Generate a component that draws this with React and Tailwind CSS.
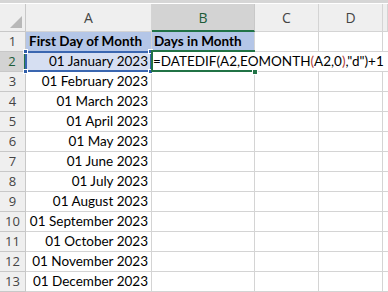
const months = [
  'January', 'February', 'March', 'April', 'May', 'June',
  'July', 'August', 'September', 'October', 'November', 'December',
];

const cols = ['A', 'B', 'C', 'D', ''];

function Handle({ className }) {
  return <div className={`absolute w-[5px] h-[5px] bg-[#2f5da8] border border-white ${className}`} />;
}

export default function App() {
  return (
    <div className="w-[388px] h-[292px] overflow-hidden bg-white relative font-['Lato','Liberation_Sans',sans-serif] text-[13.5px] text-black">
      {/* strip above the headers */}
      <div className="h-[3px] bg-[#d6d6d6] border-b border-white box-content" />

      <div className="grid grid-cols-[26px_126px_103px_64px_64px_1fr]">
        {/* column headers */}
        <div className="h-[28px] bg-[#efefef] border-r border-b border-[#c8c8c8] relative">
          <div className="absolute right-[3px] bottom-[3px] w-0 h-0 border-l-[12px] border-l-transparent border-b-[12px] border-b-[#b8b8b8]" />
        </div>
        {cols.map((c) =>
          c === 'B' ? (
            <div key={c} className="h-[28px] bg-[#d3d3d3] border-r border-[#c8c8c8] border-b-2 border-b-[#217346] flex items-center justify-center font-['Open_Sans',sans-serif] text-[14px] text-[#1d5c38]">
              {c}
            </div>
          ) : (
            <div key={c} className="h-[28px] bg-[#efefef] border-r border-b border-[#d4d4d4] flex items-center justify-center font-['Open_Sans',sans-serif] text-[14px] text-[#444]">
              {c}
            </div>
          )
        )}

        {/* row 1 */}
        <div className="h-[20px] bg-[#efefef] border-r border-b border-[#c8c8c8] flex items-center justify-center font-['Open_Sans',sans-serif] text-[13px] text-[#444]">1</div>
        <div className="h-[20px] bg-[#b4c6e7] border-r border-b border-[#d4d4d4] flex items-center px-[3px] font-bold whitespace-nowrap">First Day of Month</div>
        <div className="h-[20px] bg-[#b4c6e7] border-r border-b border-[#d4d4d4] flex items-center px-[2px] font-bold whitespace-nowrap">Days in Month</div>
        <div className="h-[20px] border-r border-b border-[#d4d4d4]" />
        <div className="h-[20px] border-r border-b border-[#d4d4d4]" />
        <div className="h-[20px] border-b border-[#d4d4d4]" />

        {/* row 2: A2 referenced, B2 being edited */}
        <div className="h-[20px] bg-[#d3d3d3] border-r-2 border-r-[#217346] border-b border-[#c8c8c8] flex items-center justify-center font-['Open_Sans',sans-serif] text-[13px] text-[#1d5c38]">2</div>
        <div className="h-[20px] bg-[#d6dff2] border-r border-b border-[#d4d4d4] flex items-center justify-end px-[3px] whitespace-nowrap">01 January 2023</div>
        <div className="h-[20px] col-span-4 border-b border-[#d4d4d4] flex items-center px-[1px] whitespace-nowrap">
          =DATEDIF(A2,EOMONTH<span className="text-[#b0403a]">(</span>A2,0<span className="text-[#b0403a]">)</span>,"d")+1
        </div>

        {months.slice(1).map((m, i) => (
          <Row key={m} n={i + 3} label={`01 ${m} 2023`} />
        ))}
      </div>

      {/* reference border round A2 */}
      <div className="absolute left-[25px] top-[51px] w-[127px] h-[21px] border-2 border-[#3a66b0]" />
      <Handle className="left-[23px] top-[49px]" />
      <Handle className="left-[148px] top-[49px]" />
      <Handle className="left-[23px] top-[69px]" />
      <Handle className="left-[148px] top-[69px]" />

      {/* active cell B2 */}
      <div className="absolute left-[151px] top-[50px] w-[104px] h-[2px] bg-[#217346]" />
      <div className="absolute left-[151px] top-[52px] w-[2px] h-[19px] bg-[#217346]" />
      <div className="absolute left-[151px] top-[70px] w-[104px] h-[2px] bg-[#217346]" />
      <div className="absolute left-[252px] top-[69px] w-[6px] h-[6px] bg-[#217346] border border-white" />
    </div>
  );
}

function Row({ n, label }) {
  return (
    <>
      <div className="h-[20px] bg-[#efefef] border-r border-b border-[#c8c8c8] flex items-center justify-center font-['Open_Sans',sans-serif] text-[13px] text-[#444]">{n}</div>
      <div className="h-[20px] border-r border-b border-[#d4d4d4] flex items-center justify-end px-[3px] whitespace-nowrap">{label}</div>
      <div className="h-[20px] border-r border-b border-[#d4d4d4]" />
      <div className="h-[20px] border-r border-b border-[#d4d4d4]" />
      <div className="h-[20px] border-r border-b border-[#d4d4d4]" />
      <div className="h-[20px] border-b border-[#d4d4d4]" />
    </>
  );
}
